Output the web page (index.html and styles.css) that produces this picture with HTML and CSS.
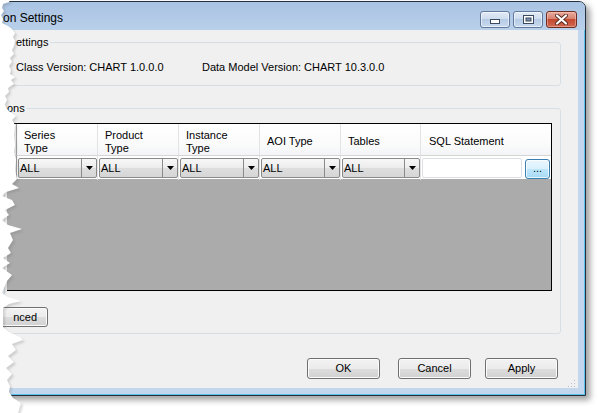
FILE: index.html
```html
<!DOCTYPE html>
<html>
<head>
<meta charset="utf-8">
<link rel="stylesheet" href="styles.css">
</head>
<body>
<div class="window">
  <div class="titlebar">
    <span class="title">on Settings</span>
    <div class="caption">
      <span class="cbtn min"><svg width="11" height="6" viewBox="0 0 11 6"><rect x="0.5" y="0.5" width="9" height="4" fill="#fff" stroke="#3b4a5e"/></svg></span>
      <span class="cbtn max"><svg width="11" height="9" viewBox="0 0 11 9"><rect x="0.5" y="0.5" width="10" height="8" fill="#fff" stroke="#3b4a5e"/><rect x="3" y="3" width="5" height="3" fill="#7d92ad" stroke="#3b4a5e" stroke-width="1"/></svg></span>
      <span class="cbtn close"><svg width="13" height="11" viewBox="0 0 13 11"><path d="M2 1.5 L11 9.5 M11 1.5 L2 9.5" stroke="#5a2a22" stroke-width="4" stroke-linecap="round"/><path d="M2 1.5 L11 9.5 M11 1.5 L2 9.5" stroke="#fff" stroke-width="2.2" stroke-linecap="round"/></svg></span>
    </div>
  </div>
  <div class="frame">
    <div class="client">
      <fieldset class="group g1">
        <legend>ettings</legend>
        <div class="versions"><span class="ver1">Class Version: CHART 1.0.0.0</span><span>Data Model Version: CHART 10.3.0.0</span></div>
      </fieldset>
      <fieldset class="group g2">
        <legend>ons</legend>
        <div class="grid">
          <div class="ghead">
            <div class="hc"></div>
            <div class="hc">Series<br>Type</div>
            <div class="hc">Product<br>Type</div>
            <div class="hc">Instance<br>Type</div>
            <div class="hc">AOI Type</div>
            <div class="hc">Tables</div>
            <div class="hc">SQL Statement</div>
          </div>
          <div class="grow">
            <div class="gc rh"></div>
            <div class="gc"><div class="combo"><span class="ctext">ALL</span><span class="cdrop"><svg width="7" height="4" viewBox="0 0 7 4"><polygon points="0,0 7,0 3.5,4" fill="#000"/></svg></span></div></div>
            <div class="gc"><div class="combo"><span class="ctext">ALL</span><span class="cdrop"><svg width="7" height="4" viewBox="0 0 7 4"><polygon points="0,0 7,0 3.5,4" fill="#000"/></svg></span></div></div>
            <div class="gc"><div class="combo"><span class="ctext">ALL</span><span class="cdrop"><svg width="7" height="4" viewBox="0 0 7 4"><polygon points="0,0 7,0 3.5,4" fill="#000"/></svg></span></div></div>
            <div class="gc"><div class="combo"><span class="ctext">ALL</span><span class="cdrop"><svg width="7" height="4" viewBox="0 0 7 4"><polygon points="0,0 7,0 3.5,4" fill="#000"/></svg></span></div></div>
            <div class="gc"><div class="combo"><span class="ctext">ALL</span><span class="cdrop"><svg width="7" height="4" viewBox="0 0 7 4"><polygon points="0,0 7,0 3.5,4" fill="#000"/></svg></span></div></div>
            <div class="gc sql"><span class="textbox"></span><span class="dots">...</span></div>
          </div>
          <div class="gempty"></div>
        </div>
        <button class="btn adv">nced</button>
      </fieldset>
      <div class="footer">
        <button class="btn ok">OK</button>
        <button class="btn cancel">Cancel</button>
        <button class="btn apply">Apply</button>
      </div>
      <svg class="grip" width="9" height="8" viewBox="0 0 9 8">
        <g fill="#b9c3cd"><rect x="7" y="1" width="1" height="1"/><rect x="4" y="4" width="1" height="1"/><rect x="7" y="4" width="1" height="1"/><rect x="1" y="7" width="1" height="1"/><rect x="4" y="7" width="1" height="1"/><rect x="7" y="7" width="1" height="1"/></g>
      </svg>
    </div>
  </div>
</div>
<svg class="tear" width="30" height="413" viewBox="0 0 30 413">
  <defs><filter id="b" x="-50%" y="-5%" width="200%" height="110%"><feGaussianBlur stdDeviation="1.2"/></filter></defs>
  <polygon class="tear-shadow" filter="url(#b)" transform="translate(2,2)" points="0,0 10,0 9,2 3,4 2,8 4,11 1,15 3,19 2,23 8,26 12,29 15,33 13,37 15,41 14,46 12,50 14,54 10,58 12,62 9,66 11,70 10,74 15,77 11,80 14,84 8,88 9,92 5,96 7,100 5,104 6,108 10,112 16,116 12,120 15,125 14,135 15,145 14,152 16,160 15,170 17,179 12,184 19,188 6,192 2,196 12,200 15,205 5,210 9,215 2,220 8,225 22,229 10,233 13,240 8,248 11,253 3,258 10,263 2,268 12,275 7,281 4,288 2,293 8,297 21,301 9,304 3,308 3,327 9,332 20,337 23,340 12,344 16,350 8,356 14,362 6,368 12,374 7,380 10,386 9,392 13,398 21,403 18,413 0,413"/>
  <polygon class="tear-white" points="0,0 10,0 9,2 3,4 2,8 4,11 1,15 3,19 2,23 8,26 12,29 15,33 13,37 15,41 14,46 12,50 14,54 10,58 12,62 9,66 11,70 10,74 15,77 11,80 14,84 8,88 9,92 5,96 7,100 5,104 6,108 10,112 16,116 12,120 15,125 14,135 15,145 14,152 16,160 15,170 17,179 12,184 19,188 6,192 2,196 12,200 15,205 5,210 9,215 2,220 8,225 22,229 10,233 13,240 8,248 11,253 3,258 10,263 2,268 12,275 7,281 4,288 2,293 8,297 21,301 9,304 3,308 3,327 9,332 20,337 23,340 12,344 16,350 8,356 14,362 6,368 12,374 7,380 10,386 9,392 13,398 21,403 18,413 0,413"/>
</svg>
</body>
</html>
```
FILE: styles.css
```css
* { box-sizing: border-box; }
html, body { margin: 0; padding: 0; background: #fff; }
body {
  width: 598px;
  height: 413px;
  overflow: hidden;
  position: relative;
  font-family: "Liberation Sans", Arial, sans-serif;
  font-size: 11px;
  line-height: 13px;
  color: #000;
}
.window {
  margin: 1px 0 0 -8px;
  width: 594px;
  height: 395px;
  border: 1px solid #26313f;
  border-radius: 7px 7px 0 0;
  background: #c2d7ed;
  box-shadow: 4px 4px 6px rgba(0,0,0,0.38);
  display: flex;
  flex-direction: column;
  overflow: hidden;
}
.titlebar {
  height: 28px;
  flex: none;
  display: flex;
  align-items: flex-start;
  padding-left: 10px;
  background: linear-gradient(#a9c3e3, #b9d0ea);
}
.title {
  margin-top: 10px;
  font-size: 12px;
  line-height: 13px;
  color: #000;
}
.caption {
  margin-left: auto;
  margin-top: 9px;
  margin-right: 8px;
  display: flex;
  gap: 3px;
}
.cbtn {
  width: 30px;
  height: 17px;
  border: 1px solid #61799a;
  border-radius: 3px;
  background: linear-gradient(#e2ebf6, #cfdded 45%, #b6cbe5 50%, #c8daef);
  box-shadow: inset 0 0 0 1px rgba(255,255,255,0.55);
  display: flex;
  align-items: center;
  justify-content: center;
}
.cbtn.min svg { margin-top: 5px; }
.cbtn.close {
  width: 31px;
  border-color: #6f2e24;
  background: linear-gradient(#e9ab9d, #d88371 45%, #c4492f 50%, #d06a52);
  box-shadow: inset 0 0 0 1px rgba(255,210,200,0.45);
}
.frame {
  flex: 1;
  display: flex;
  padding: 0 6px 6px 6px;
  border: 1px solid #5ac2ea;
  border-top: 0;
}
.client {
  flex: 1;
  position: relative;
  background: #f0f0f0;
  padding: 6px 17px 0 4px;
}
.group {
  margin: 0;
  border: 1px solid #d5dfe5;
  border-radius: 3px;
  min-width: 0;
}
.group legend {
  padding: 0 2px 0 0;
  margin: 0;
  line-height: 13px;
}
.g1 { padding: 12px 0 11px 11px; }
.versions { display: flex; }
.ver1 { width: 186px; }
.g2 {
  margin-top: 16px;
  padding: 8px 8px 6px 2px;
}
.grid {
  height: 168px;
  border: 1px solid #000;
  border-left: 0;
  background: #ababab;
  display: flex;
  flex-direction: column;
}
.ghead, .grow {
  display: grid;
  grid-template-columns: 10px 81px 81px 81px 81px 80px 130px;
}
.ghead {
  height: 32px;
  background: linear-gradient(#ffffff, #fbfbfb 60%, #f3f4f6);
}
.hc {
  border-right: 1px solid #e1e3e6;
  border-bottom: 1px solid #d5d5d5;
  padding: 4px 0 0 7px;
  display: flex;
  align-items: center;
}
.hc:first-child { border-right-color: #a0a0a0; padding: 0; }
.hc:last-child { border-right: 0; padding-left: 8px; }
.grow {
  height: 23px;
  background: #fff;
}
.gc {
  border-right: 1px solid #e3e3e3;
  padding: 2px 0 1px 1px;
}
.gc.rh { border-right-color: #a0a0a0; padding: 0; }
.gc:last-child { border-right: 0; }
.combo {
  height: 20px;
  display: flex;
  border: 1px solid #8a8a8a;
  border-radius: 2px;
  background: linear-gradient(#f7f7f7, #ececec 50%, #dedede 51%, #d6d6d6);
}
.ctext {
  flex: 1;
  padding-left: 1px;
  line-height: 18px;
}
.cdrop {
  width: 15px;
  border-left: 1px solid #8a8a8a;
  display: flex;
  align-items: center;
  justify-content: center;
}
.gc.sql {
  display: flex;
  align-items: flex-start;
  padding: 2px 0 1px 1px;
}
.textbox {
  width: 100px;
  height: 20px;
  background: #fff;
  border: 1px solid #dcdfe6;
  border-radius: 2px;
}
.dots {
  margin-left: 3px;
  margin-top: 1px;
  width: 25px;
  height: 20px;
  border: 1px solid #3c7fb1;
  border-radius: 3px;
  background: linear-gradient(#eaf6fd, #d9f0fc 50%, #bee6fd 51%, #a7d9f5);
  box-shadow: inset 0 0 0 1px rgba(255,255,255,0.7);
  text-align: center;
  line-height: 16px;
}
.gempty { flex: 1; }
.btn {
  font-family: "Liberation Sans", Arial, sans-serif;
  font-size: 11px;
  line-height: 13px;
  color: #000;
  width: 73px;
  height: 21px;
  padding: 0;
  border: 1px solid #707070;
  border-radius: 3px;
  background: linear-gradient(#f3f3f3, #ebebeb 50%, #dddddd 51%, #d1d1d1);
  box-shadow: inset 0 0 0 1px #fbfbfb;
  display: block;
}
.adv {
  margin: 16px 0 0 -32px;
  height: 20px;
  text-align: right;
  padding-right: 10px;
}
.footer {
  display: flex;
  margin-top: 24px;
  padding-left: 303px;
}
.cancel { margin-left: 18px; }
.apply { margin-left: 14px; }
.grip {
  position: absolute;
  right: 2px;
  bottom: 1px;
}
.tear {
  position: absolute;
  left: 0;
  top: 0;
}
.tear-shadow { fill: #6d6d6d; opacity: 0.25; }
.tear-white { fill: #fff; }
```
